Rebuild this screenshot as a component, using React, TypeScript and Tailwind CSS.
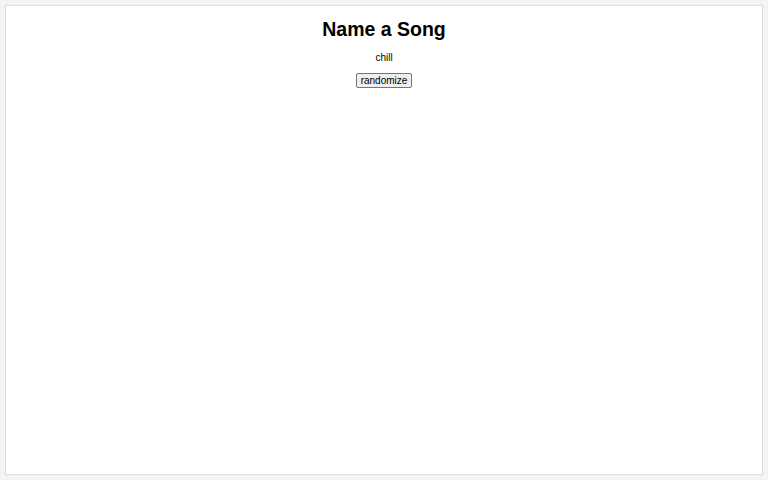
export default function App() {
  return (
    <div className="h-[480px] w-[768px] bg-[#f4f4f4] p-[5px] font-['Liberation_Sans',Arial,sans-serif]">
      <div className="flex h-full flex-col items-center border border-[#dedede] bg-white">
        <h1 className="mt-[11px] text-[19.5px] font-bold leading-[24px] text-black">Name a Song</h1>
        <p className="mt-[11px] text-[10px] leading-[12px] text-black">chill</p>
        <button className="mt-[9px] flex h-[15px] items-center rounded-[2px] border border-[#767676] bg-[#efefef] px-[4px] text-[10px] leading-[12px] text-black">
          randomize
        </button>
      </div>
    </div>
  );
}
